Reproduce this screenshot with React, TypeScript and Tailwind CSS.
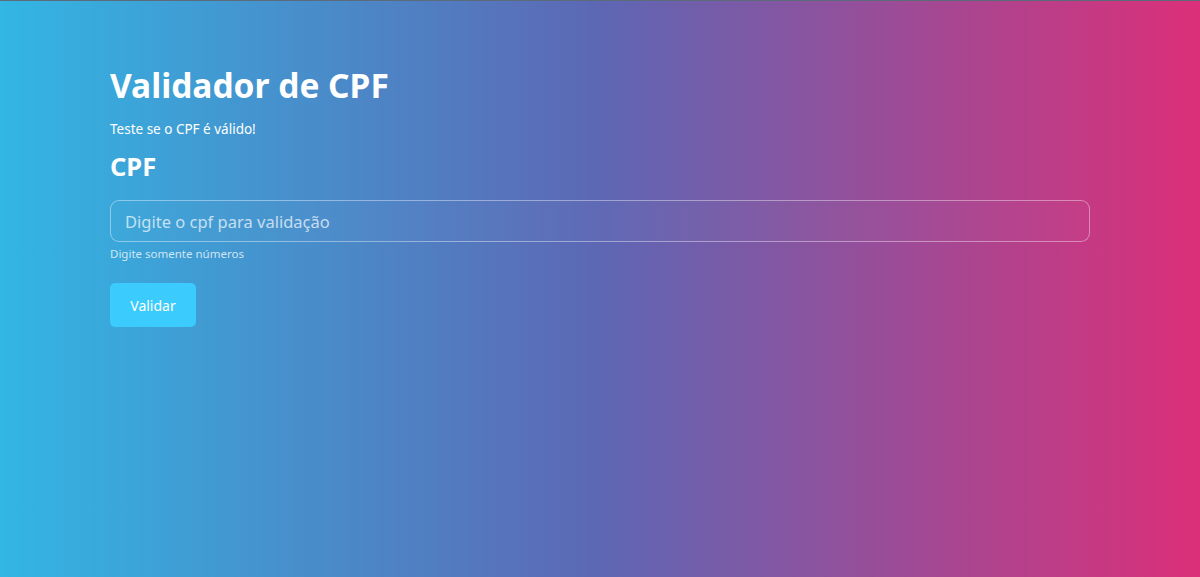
export default function App() {
  return (
    <div className="min-h-[577px] w-full border-t border-[#5b6b79] bg-[linear-gradient(to_right,#32b6e3,#5d67b4_50%,#dc2f79)] font-['Noto_Sans','Open_Sans',sans-serif] text-white">
      <div className="mx-auto w-[980px] pt-[59px]">
        <h1 className="text-[33.5px] font-bold leading-[50px]">Validador de CPF</h1>
        <p className="mt-[10px] text-[13.5px] leading-[18px]">Teste se o CPF é válido!</p>
        <h2 className="mt-[12px] text-[25.5px] font-bold leading-[33px]">CPF</h2>
        <input
          type="text"
          placeholder="Digite o cpf para validação"
          className="mt-[17px] h-[42px] w-full rounded-[9px] border border-white/40 bg-white/[0.02] px-[14px] text-[16.5px] text-white outline-none placeholder:text-white/70"
        />
        <p className="mt-[4px] text-[11.5px] leading-[16px] text-white/75">Digite somente números</p>
        <button className="mt-[21px] h-[44px] w-[86px] rounded-[5px] bg-[#3bcbfc] text-[14px] text-white">
          Validar
        </button>
      </div>
    </div>
  );
}
